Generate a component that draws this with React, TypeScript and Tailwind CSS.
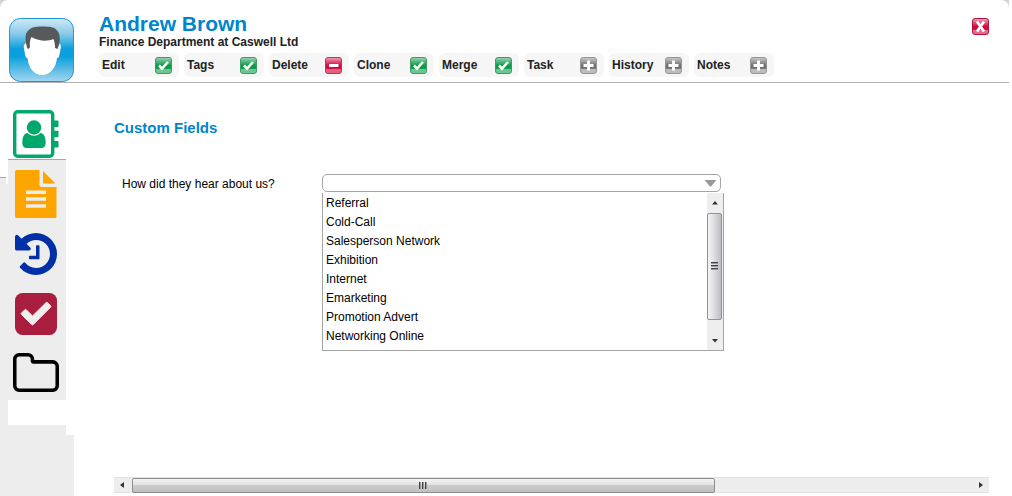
import { useState } from "react";
import type { ReactNode } from "react";

type ActionKind = "check" | "minus" | "plus";

const actions: { label: string; kind: ActionKind }[] = [
  { label: "Edit", kind: "check" },
  { label: "Tags", kind: "check" },
  { label: "Delete", kind: "minus" },
  { label: "Clone", kind: "check" },
  { label: "Merge", kind: "check" },
  { label: "Task", kind: "plus" },
  { label: "History", kind: "plus" },
  { label: "Notes", kind: "plus" },
];

const sources = [
  "Referral",
  "Cold-Call",
  "Salesperson Network",
  "Exhibition",
  "Internet",
  "Emarketing",
  "Promotion Advert",
  "Networking Online",
];

// Small glossy square used by the action buttons and the close button
function GlossIcon({ kind }: { kind: ActionKind | "close" }) {
  const colors = {
    check: { edge: "#3f9a63", top: "#8fd0a8", mid: "#0b9a48", low: "#6cc692" },
    minus: { edge: "#c2325a", top: "#ef93aa", mid: "#d2093f", low: "#e45f7d" },
    close: { edge: "#b5123f", top: "#ee9bb0", mid: "#cf0a3c", low: "#e86a88" },
    plus: { edge: "#969696", top: "#c4c4c4", mid: "#707070", low: "#bcbcbc" },
  }[kind];
  return (
    <svg width="17" height="17" viewBox="0 0 17 17" aria-hidden="true">
      <defs>
        <linearGradient id={`gloss-${kind}`} x1="0" y1="0" x2="0" y2="1">
          <stop offset="0.05" stopColor={colors.top} />
          <stop offset="0.5" stopColor={colors.mid} />
          <stop offset="0.68" stopColor={colors.mid} />
          <stop offset="0.75" stopColor={colors.low} />
          <stop offset="1" stopColor={colors.low} />
        </linearGradient>
      </defs>
      <rect x="0.5" y="0.5" width="16" height="16" rx="2.5" fill={`url(#gloss-${kind})`} stroke={colors.edge} />
      {kind === "check" && <path d="M4 8.5l3 3.2 6-6.7" fill="none" stroke="#fff" strokeWidth="2.6" />}
      {kind === "minus" && <rect x="4" y="7" width="9.5" height="3" rx="0.5" fill="#fff" />}
      {kind === "plus" && <path d="M8.5 3.5v10M3.5 8.5h10" stroke="#fff" strokeWidth="3" />}
      {kind === "close" && <path d="M5 3.5l7 10M12 3.5l-7 10" stroke="#fff" strokeWidth="2.8" />}
    </svg>
  );
}

function Avatar() {
  return (
    <svg width="65" height="64" viewBox="0 0 65 64" role="img" aria-label="Andrew Brown">
      <defs>
        <linearGradient id="avatar-bg" x1="0" y1="0" x2="0" y2="1">
          <stop offset="0" stopColor="#d3e8f4" />
          <stop offset="0.25" stopColor="#86c9ea" />
          <stop offset="0.48" stopColor="#0a9fdd" />
          <stop offset="0.6" stopColor="#0a9fdd" />
          <stop offset="1" stopColor="#a3d6ef" />
        </linearGradient>
      </defs>
      <rect x="0.5" y="0.5" width="64" height="63" rx="11" fill="url(#avatar-bg)" stroke="#1b98d5" />
      <path
        d="M18 25.500c-3-.5-3.500 2-3 5l1.200 7c.4 2 1.300 2.500 2.300 2.500C19.500 50 25 57 33 57s14-7 15-17c1 0 2-.5 2.300-2.500l1.400-7c.5-3 0-5.500-3-5L46 17l-13-3-12 3z"
        fill="#fff"
      />
      <path
        d="M17.500 27c-1-5-1.500-10 .5-13 3-4.500 8-5.500 15.500-5.500s12 .5 15 4.500c3 4 2.500 9 1.500 14l-1.500 4-2.500-1c0-4-.5-6-1.500-9-6 2.500-14 2.500-22-2-1.500 3-2 5.500-1.500 10l-1.500 2-1.500-1z"
        fill="#58595b"
      />
    </svg>
  );
}

function AddressBookIcon() {
  return (
    <svg width="46" height="48" viewBox="0 0 46 48" fill="#00a86b" aria-hidden="true">
      <rect x="1.700" y="1.700" width="38" height="44.600" rx="3" fill="none" stroke="#00a86b" strokeWidth="3.400" />
      <rect x="40" y="10.500" width="5.500" height="6.500" rx="0.8" />
      <rect x="40" y="20.700" width="5.500" height="6.500" rx="0.8" />
      <rect x="40" y="31" width="5.500" height="6.500" rx="0.8" />
      <circle cx="21" cy="17.500" r="7.200" />
      <path d="M14.500 23c-4 .5-5.200 5-5.200 10 0 3 1.700 5 4.200 5h15c2.500 0 4.200-2 4.200-5 0-5-1.200-9.500-5.200-10-1.500 1.500-4 2.700-6.500 2.700S16 24.500 14.500 23z" />
    </svg>
  );
}

function FileIcon() {
  return (
    <svg width="42" height="48" viewBox="0 0 42 48" fill="#ffa500" aria-hidden="true">
      <path
        fillRule="evenodd"
        d="M1.500 0H24.500V14.500q0 2.500 2.500 2.500H41.500V46.500q0 1.500-1.500 1.500H1.500Q0 48 0 46.500V1.500Q0 0 1.500 0zM11 20.500v3.500h20v-3.500zM11 27.300v3.500h20v-3.500zM11 34.200v3.500h20v-3.500z"
      />
      <path d="M28 1l12.500 12.500H28z" />
    </svg>
  );
}

function HistoryIcon() {
  return (
    <svg width="42" height="42" viewBox="0 128 1536 1536" fill="#0030a8" aria-hidden="true">
      <path d="M1536 896q0 156-61 298t-164 245-245 164-298 61q-172 0-327-72.500t-264-204.500q-7-10-6.500-22.500t8.500-20.500l137-138q10-9 25-9 16 2 23 12 73 95 179 147t225 52q104 0 198.500-40.500t163.500-109.500 109.500-163.500 40.500-198.500-40.500-198.500-109.500-163.500-163.500-109.500-198.500-40.500q-98 0-188 35.500t-160 101.500l137 138q31 30 14 69-17 40-59 40h-448q-26 0-45-19t-19-45v-448q0-42 40-59 39-17 69 14l130 129q107-101 244.500-156.500t284.500-55.500q156 0 298 61t245 164 164 245 61 298zm-640-288v448q0 14-9 23t-23 9h-320q-14 0-23-9t-9-23v-64q0-14 9-23t23-9h224v-352q0-14 9-23t23-9h64q14 0 23 9t9 23z" />
    </svg>
  );
}

function TaskIcon() {
  return (
    <svg width="42" height="42" viewBox="0 0 42 42" aria-hidden="true">
      <rect width="42" height="42" rx="7.500" fill="#a91e3f" />
      <path
        d="M6.500 20l3.200-3.200q.8-.8 1.600 0L17.500 23 31 9.700q.8-.8 1.600 0L35.500 12.700q.8.8 0 1.600L18.300 31.500q-.8.8-1.600 0L6.500 21.600q-.8-.8 0-1.600z"
        fill="#eee"
        stroke="#eee"
      />
    </svg>
  );
}

function FolderIcon() {
  return (
    <svg width="46" height="39" viewBox="0 128 1664 1408" aria-hidden="true">
      <path d="M1536 1312v-704q0-40-28-68t-68-28h-704q-40 0-68-28t-28-68v-64q0-40-28-68t-68-28h-320q-40 0-68 28t-28 68v960q0 40 28 68t68 28h1216q40 0 68-28t28-68zm128-704v704q0 92-66 158t-158 66h-1216q-92 0-158-66t-66-158v-960q0-92 66-158t158-66h320q92 0 158 66t66 158v32h672q92 0 158 66t66 158z" />
    </svg>
  );
}

function SideTab({ label, children }: { label: string; children: ReactNode }) {
  return (
    <button type="button" aria-label={label} className="flex h-[60px] w-full items-center justify-center pr-[2px] last:h-14">
      {children}
    </button>
  );
}

function Header() {
  return (
    <div className="bg-[#d2d2d2]">
      <header className="flex items-end rounded-t-lg border-b border-[#b0b0b0] bg-white pl-[9px] pr-5">
        <Avatar />
        <div className="ml-[25px] flex-1 pb-[5px] pt-3">
          <h1 className="text-[21px] font-bold leading-6 text-[#0085cd]">Andrew Brown</h1>
          <p className="text-[12px] font-bold leading-3 text-[#222]">Finance Department at Caswell Ltd</p>
          <div className="mt-[5px] flex flex-wrap gap-[5px]">
            {actions.map(({ label, kind }) => (
              <button
                key={label}
                type="button"
                className="flex h-6 w-20 items-center justify-between rounded-md bg-[#f6f6f6] pl-[3px] pr-[7px] text-[12px] font-bold text-[#222]"
              >
                {label}
                <GlossIcon kind={kind} />
              </button>
            ))}
          </div>
        </div>
        <button type="button" aria-label="Close" className="mt-[18px] self-start">
          <GlossIcon kind="close" />
        </button>
      </header>
    </div>
  );
}

function Sidebar() {
  return (
    <nav className="flex w-[74px] shrink-0 flex-col">
      <div className="flex">
        <div className="flex w-2 flex-col pt-[94px]">
          <div className="mr-[2px] h-[7px] border-t border-[#a8a8a8] bg-[#ededed]" />
          <div className="flex-1 bg-[#ededed]" />
        </div>
        <div className="w-[58px]">
          <div className="flex h-[76px] items-end justify-center pb-px pr-[2px]">
            <button type="button" aria-label="Contact">
              <AddressBookIcon />
            </button>
          </div>
          <div className="border-t border-[#a8a8a8] bg-[#ededed] pt-1">
            <SideTab label="Documents"><FileIcon /></SideTab>
            <SideTab label="Activity"><HistoryIcon /></SideTab>
            <SideTab label="To do"><TaskIcon /></SideTab>
            <SideTab label="Folder"><FolderIcon /></SideTab>
          </div>
          <div className="h-[25px]" />
        </div>
      </div>
      <div className="mr-2 h-[10px] bg-[#ededed]" />
      <div className="flex-1 bg-[#ededed]" />
    </nav>
  );
}

function SourceField() {
  const [value, setValue] = useState("");
  const [open, setOpen] = useState(true);

  const choose = (source: string) => {
    setValue(source);
    setOpen(false);
  };

  return (
    <div className="mt-9 flex items-center pl-2 text-[12px] text-black">
      <label htmlFor="source" className="w-[200px] shrink-0 pt-[2px] leading-4">How did they hear about us?</label>
      <div className="relative w-[399px]">
        <select
          id="source"
          value={value}
          onChange={(e) => choose(e.target.value)}
          onMouseDown={(e) => {
            e.preventDefault();
            setOpen(!open);
          }}
          className="block h-[18px] w-full appearance-none rounded-[5px] border border-[#a5a5a5] bg-white px-1 leading-4"
        >
          <option value="" />
          {sources.map((source) => (
            <option key={source}>{source}</option>
          ))}
        </select>
        <svg className="pointer-events-none absolute right-1 top-[6px]" width="13" height="7" viewBox="0 0 13 7" aria-hidden="true">
          <path d="M0.500 0h12L7 6.500H6z" fill="#999" />
        </svg>
        {open && (
          <div className="absolute left-0 top-[19px] z-10 flex h-[158px] w-[402px] border-x border-b border-[#a5a5a5] bg-white">
            <ul role="listbox" aria-label="Source" className="flex-1 pt-px">
              {sources.map((source) => (
                <li
                  key={source}
                  role="option"
                  aria-selected={source === value}
                  onClick={() => choose(source)}
                  className="h-[19px] cursor-default pl-[3px] leading-[19px]"
                >
                  {source}
                </li>
              ))}
            </ul>
            <div className="flex w-4 flex-col items-center bg-[#eee]">
              <div className="flex h-5 items-center">
                <svg width="6" height="4" viewBox="0 0 6 4" aria-hidden="true"><path d="M3 0l3 3.500H0z" fill="#333" /></svg>
              </div>
              <div className="flex h-[107px] w-[15px] items-center justify-center self-start rounded-xs border border-[#929292] bg-linear-to-r from-[#f5f5f5] via-[#dcdcdf] to-[#bcbcc2]">
                <svg width="7" height="9" viewBox="0 0 7 9" aria-hidden="true">
                  <path d="M0 .5h7M0 3.500h7M0 6.500h7" stroke="#444" />
                  <path d="M0 1.500h7M0 4.500h7M0 7.500h7" stroke="#999" />
                </svg>
              </div>
              <div className="flex flex-1 items-center pt-3">
                <svg width="6" height="4" viewBox="0 0 6 4" aria-hidden="true"><path d="M3 3.500l3-3.500H0z" fill="#333" /></svg>
              </div>
            </div>
          </div>
        )}
      </div>
    </div>
  );
}

function HorizontalScrollbar() {
  return (
    <div className="mt-auto flex h-4 items-center border-y border-[#e2e2e2] bg-[#ededed]">
      <div className="flex w-[18px] shrink-0 justify-center pr-[2px]">
        <svg width="4" height="6" viewBox="0 0 4 6" aria-hidden="true"><path d="M0 3l4-3v6z" fill="#333" /></svg>
      </div>
      <div className="-my-px flex h-[15px] w-2/3 items-center justify-center rounded-xs border border-[#8e8e8e] bg-[linear-gradient(to_bottom,#f4f4f4_0%,#e2e2e2_45%,#cbcbcb_50%,#c0c0c2_100%)]">
        <svg width="9" height="7" viewBox="0 0 9 7" aria-hidden="true">
          <path d="M.5 0v7M3.500 0v7M6.500 0v7" stroke="#444" />
          <path d="M1.500 0v7M4.500 0v7M7.500 0v7" stroke="#999" />
        </svg>
      </div>
      <div className="ml-auto pr-[6px]">
        <svg width="4" height="6" viewBox="0 0 4 6" aria-hidden="true"><path d="M4 3L0 0v6z" fill="#333" /></svg>
      </div>
    </div>
  );
}

export default function App() {
  return (
    <div className="flex min-h-screen flex-col bg-white pr-[3px] font-['Liberation_Sans',Arial,sans-serif]">
      <Header />
      <div className="flex flex-1">
        <Sidebar />
        <main className="flex min-w-0 flex-1 flex-col pb-[3px] pl-10 pr-5 pt-[35px]">
          <h2 className="text-[15px] font-bold leading-5 text-[#0085cd]">Custom Fields</h2>
          <SourceField />
          <HorizontalScrollbar />
        </main>
      </div>
    </div>
  );
}
